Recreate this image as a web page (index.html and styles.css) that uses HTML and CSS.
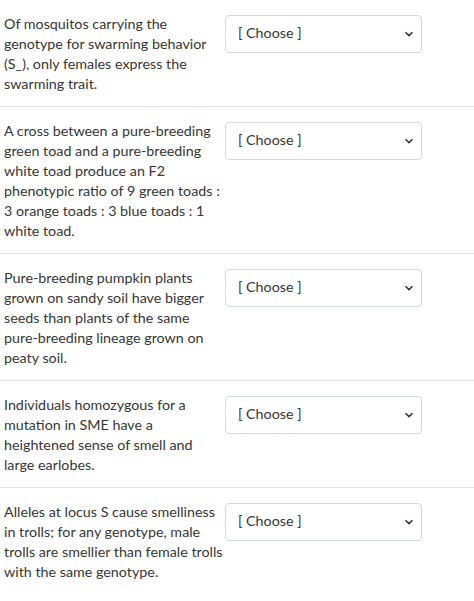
FILE: index.html
```html
<!DOCTYPE html>
<html>
<head>
<meta charset="utf-8">
<link rel="stylesheet" href="styles.css">
</head>
<body>
<div class="list">
  <div class="row">
    <div class="q">Of mosquitos carrying the genotype for swarming behavior (S_), only females express the swarming trait.</div>
    <div class="sel"><span>[ Choose ]</span><svg class="chev" width="10" height="6" viewBox="0 0 10 6"><path d="M1.5 1.2 L5 4.6 L8.5 1.2" fill="none" stroke="#333" stroke-width="1.5"/></svg></div>
  </div>
  <div class="row">
    <div class="q">A cross between a pure-breeding green toad and a pure-breeding white toad produce an F2 phenotypic ratio of 9 green toads : 3 orange toads : 3 blue toads : 1 white toad.</div>
    <div class="sel"><span>[ Choose ]</span><svg class="chev" width="10" height="6" viewBox="0 0 10 6"><path d="M1.5 1.2 L5 4.6 L8.5 1.2" fill="none" stroke="#333" stroke-width="1.5"/></svg></div>
  </div>
  <div class="row">
    <div class="q">Pure-breeding pumpkin plants grown on sandy soil have bigger seeds than plants of the same pure-breeding lineage grown on peaty soil.</div>
    <div class="sel"><span>[ Choose ]</span><svg class="chev" width="10" height="6" viewBox="0 0 10 6"><path d="M1.5 1.2 L5 4.6 L8.5 1.2" fill="none" stroke="#333" stroke-width="1.5"/></svg></div>
  </div>
  <div class="row">
    <div class="q">Individuals homozygous for a mutation in SME have a heightened sense of smell and large earlobes.</div>
    <div class="sel"><span>[ Choose ]</span><svg class="chev" width="10" height="6" viewBox="0 0 10 6"><path d="M1.5 1.2 L5 4.6 L8.5 1.2" fill="none" stroke="#333" stroke-width="1.5"/></svg></div>
  </div>
  <div class="row last">
    <div class="q">Alleles at locus S cause smelliness in trolls; for any genotype, male trolls are smellier than female trolls with the same genotype.</div>
    <div class="sel"><span>[ Choose ]</span><svg class="chev" width="10" height="6" viewBox="0 0 10 6"><path d="M1.5 1.2 L5 4.6 L8.5 1.2" fill="none" stroke="#333" stroke-width="1.5"/></svg></div>
  </div>
</div>
</body>
</html>
```

FILE: styles.css
```css
html, body {
  margin: 0;
  padding: 0;
  background: #ffffff;
}
body {
  font-family: Lato, "Liberation Sans", sans-serif;
  font-size: 14.3px;
  line-height: 20px;
  color: #363636;
}
.list {
  display: flex;
  flex-direction: column;
}
.row {
  display: flex;
  align-items: flex-start;
  padding: 14px 0 12px 4px;
  border-bottom: 1px solid #e2e4e6;
}
.row.last {
  border-bottom: none;
}
.q {
  width: 220px;
  flex: none;
}
.sel {
  margin-left: 1px;
  margin-top: 1px;
  width: 197px;
  height: 38px;
  box-sizing: border-box;
  border: 1px solid #d4d8db;
  border-radius: 4px;
  display: flex;
  align-items: center;
  justify-content: space-between;
  padding: 0 7px 0 12px;
  background: #fff;
}
.sel span {
  margin-top: -2px;
}
.chev {
  display: block;
}
```
